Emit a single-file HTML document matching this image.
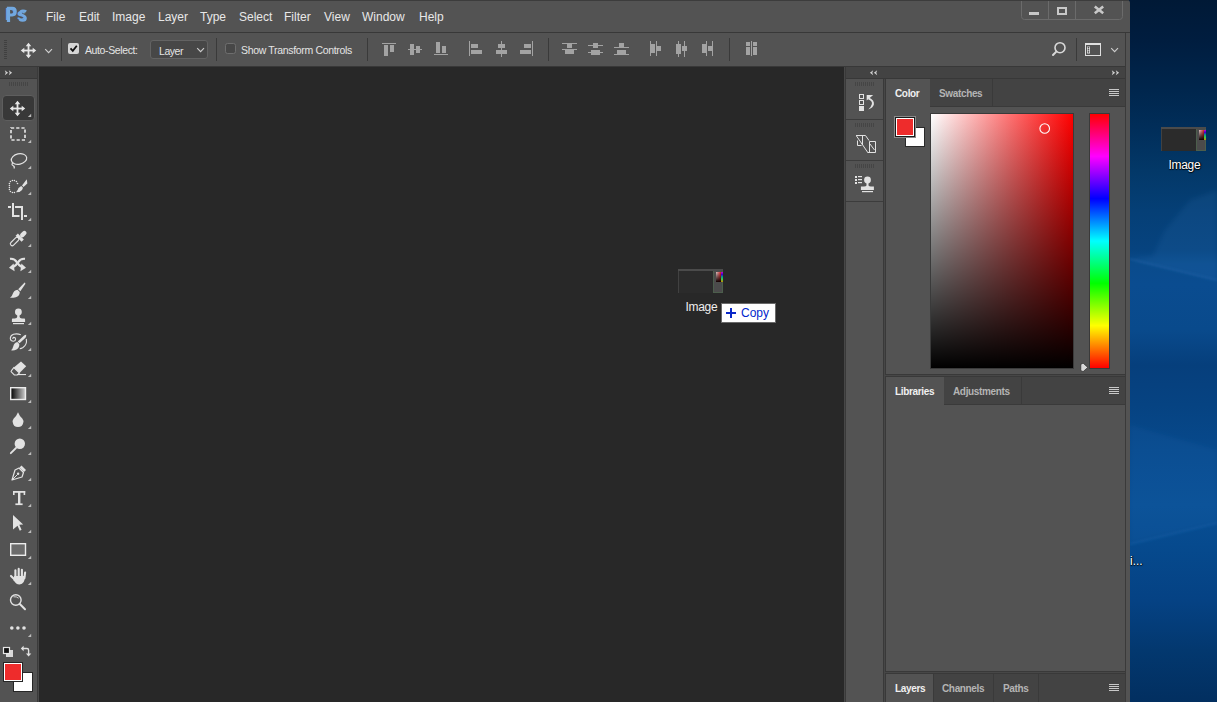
<!DOCTYPE html>
<html><head><meta charset="utf-8">
<style>
*{margin:0;padding:0;box-sizing:border-box}
html,body{width:1217px;height:702px;overflow:hidden}
body{position:relative;font-family:"Liberation Sans",sans-serif;
background:linear-gradient(180deg,#001936 0px,#001d3f 40px,#00264d 90px,#012e5a 130px,#033868 170px,#053f76 210px,#06437f 250px,#0a4b8c 264px,#0a4c90 285px,#094a8c 330px,#063f7c 365px,#064382 405px,#07498c 450px,#084e94 505px,#064a8e 545px,#054284 600px,#03386f 650px,#022f60 702px);}
.a{position:absolute}
.t{position:absolute;white-space:nowrap;line-height:1}
#win{position:absolute;left:0;top:0;width:1130px;height:702px;background:#535353;border-top-right-radius:3px;overflow:hidden}
.menu{font-size:12px;color:#e8e8e8;top:11px}
.opt{font-size:10.5px;color:#e4e4e4;letter-spacing:-0.38px}
.tab{font-size:10px;font-weight:bold;letter-spacing:-0.35px;color:#f0f0f0;margin-top:1px}
.tab.in{color:#b4b4b4}
</style></head><body>
<div id="win">
  <!-- top border -->
  <div class="a" style="left:0;top:0;width:1130px;height:1px;background:#3c3c3c"></div>
  <!-- menubar line -->
  <div class="a" style="left:0;top:32px;width:1130px;height:1px;background:#383838"></div>
  <!-- options bar bottom line -->
  <div class="a" style="left:0;top:66px;width:1130px;height:1px;background:#383838"></div>
  <!-- left toolbar header -->
  <div class="a" style="left:0;top:67px;width:37px;height:11px;background:#434343"></div>
  <div class="a" style="left:0;top:78px;width:37px;height:1px;background:#383838"></div>
  <div class="a" style="left:37px;top:67px;width:2px;height:635px;background:#484848"></div>
  <div class="a" style="left:37px;top:67px;width:1px;height:635px;background:#3a3a3a"></div>
  <!-- canvas -->
  <div class="a" style="left:39px;top:67px;width:805px;height:635px;background:#282828"></div>
  <!-- dock strips -->
  <div class="a" style="left:844px;top:67px;width:2px;height:635px;background:#474747;border-right:1px solid #393939"></div>
  <div class="a" style="left:846px;top:67px;width:279px;height:11px;background:#434343"></div>
  <div class="a" style="left:846px;top:78px;width:279px;height:1px;background:#383838"></div>
  <div class="a" style="left:883px;top:79px;width:3px;height:623px;background:#474747;border-left:1px solid #393939;border-right:1px solid #393939"></div>
  <div class="a" style="left:1125px;top:33px;width:1px;height:669px;background:#3a3a3a"></div>
  <div class="a" style="left:1126px;top:33px;width:4px;height:669px;background:#535353"></div>
  <!-- dock button separators -->
  <div class="a" style="left:846px;top:119px;width:37px;height:1px;background:#3c3c3c"></div>
  <div class="a" style="left:846px;top:160px;width:37px;height:1px;background:#3c3c3c"></div>
  <div class="a" style="left:846px;top:201px;width:37px;height:1px;background:#3c3c3c"></div>

  <!-- Color panel tabs bar -->
  <div class="a" style="left:886px;top:79px;width:239px;height:28px;background:#434343"></div>
  <div class="a" style="left:886px;top:79px;width:44px;height:28px;background:#535353"></div>
  <div class="a" style="left:930px;top:106px;width:195px;height:1px;background:#3a3a3a"></div>
  <div class="a" style="left:992px;top:79px;width:1px;height:27px;background:#3a3a3a"></div>
  <!-- color panel bottom -->
  <div class="a" style="left:885px;top:374px;width:240px;height:3px;background:#474747;border-top:1px solid #393939;border-bottom:1px solid #393939"></div>
  <!-- Libraries tabs -->
  <div class="a" style="left:886px;top:377px;width:239px;height:27px;background:#434343"></div>
  <div class="a" style="left:886px;top:377px;width:58px;height:28px;background:#535353"></div>
  <div class="a" style="left:944px;top:404px;width:181px;height:1px;background:#3a3a3a"></div>
  <div class="a" style="left:1021px;top:377px;width:1px;height:27px;background:#3a3a3a"></div>
  <!-- libraries bottom -->
  <div class="a" style="left:885px;top:671px;width:240px;height:3px;background:#474747;border-top:1px solid #393939;border-bottom:1px solid #393939"></div>
  <!-- Layers tabs -->
  <div class="a" style="left:886px;top:674px;width:239px;height:28px;background:#434343"></div>
  <div class="a" style="left:886px;top:674px;width:47px;height:28px;background:#535353"></div>
  <div class="a" style="left:933px;top:674px;width:1px;height:28px;background:#3a3a3a"></div>
  <div class="a" style="left:993px;top:674px;width:1px;height:28px;background:#3a3a3a"></div>
  <div class="a" style="left:1038px;top:674px;width:1px;height:28px;background:#3a3a3a"></div>

  <!-- text -->
  <div class="t" style="left:5px;top:6px;font-size:17px;font-weight:bold;color:#6ea6de;letter-spacing:0.5px">Ps</div>
  <div class="t menu" style="left:46px">File</div>
  <div class="t menu" style="left:79px">Edit</div>
  <div class="t menu" style="left:112px">Image</div>
  <div class="t menu" style="left:158px">Layer</div>
  <div class="t menu" style="left:200px">Type</div>
  <div class="t menu" style="left:239px">Select</div>
  <div class="t menu" style="left:284px">Filter</div>
  <div class="t menu" style="left:324px">View</div>
  <div class="t menu" style="left:362px">Window</div>
  <div class="t menu" style="left:419px">Help</div>

  <div class="t opt" style="left:85px;top:45px">Auto-Select:</div>
  <div class="a" style="left:150px;top:40px;width:58px;height:19px;background:#474747;border:1px solid #636363;border-radius:3px"></div>
  <div class="t opt" style="left:159px;top:45.5px;letter-spacing:-0.45px">Layer</div>
  <div class="t opt" style="left:241px;top:45px;letter-spacing:-0.33px">Show Transform Controls</div>

  <div class="t tab" style="left:895px;top:88px">Color</div>
  <div class="t tab in" style="left:939px;top:88px">Swatches</div>
  <div class="t tab" style="left:895px;top:386px">Libraries</div>
  <div class="t tab in" style="left:953px;top:386px">Adjustments</div>
  <div class="t tab" style="left:895px;top:683px">Layers</div>
  <div class="t tab in" style="left:942px;top:683px">Channels</div>
  <div class="t tab in" style="left:1003px;top:683px">Paths</div>

  <!-- color field -->
  <div class="a" style="left:930px;top:113px;width:144px;height:256px;background:#3a3a3a"></div>
  <div class="a" style="left:931px;top:114px;width:142px;height:254px;background:linear-gradient(0deg,#000 0%,rgba(0,0,0,0) 100%),linear-gradient(90deg,#fff 0%,#f00 100%)"></div>
  <div class="a" style="left:1089px;top:113px;width:21px;height:256px;background:#3a3a3a"></div>
  <div class="a" style="left:1090px;top:114px;width:19px;height:254px;background:linear-gradient(180deg,#f00 0%,#f0f 16.67%,#00f 33.33%,#0ff 50%,#0f0 66.67%,#ff0 83.33%,#f00 100%)"></div>

  <!-- ghost -->
  <div class="a" style="left:678px;top:269px;width:45px;height:24px;background:#2b2b2b"></div>
  <div class="a" style="left:678px;top:269px;width:45px;height:2px;background:#4b4b4b"></div>
  <div class="a" style="left:678px;top:271px;width:1px;height:22px;background:#414141"></div>
  <div class="a" style="left:713px;top:271px;width:10px;height:22px;background:#4b4b4b;border:1px solid #4c5e4c;border-top:none"></div>
  <div class="a" style="left:716px;top:272px;width:5px;height:10px;background:linear-gradient(0deg,#100 0%,rgba(0,0,0,0) 100%),linear-gradient(90deg,#d8c8c8,#d42020)"></div>
  <div class="a" style="left:721px;top:272px;width:2px;height:10px;background:linear-gradient(180deg,#c0c,#40c,#0a8,#4c4,#c80)"></div>
  <div class="t" style="left:685.5px;top:301px;font-size:12px;color:#eee;letter-spacing:-0.3px">Image</div>
  <div class="a" style="left:721px;top:303px;width:55px;height:20px;background:#fff;border:1px solid #6a6a6a"></div>
  <div class="t" style="left:741px;top:307px;font-size:12px;color:#0026cc">Copy</div>
  <div class="a" style="left:726px;top:312px;width:10px;height:2px;background:#0a28c8"></div>
  <div class="a" style="left:730px;top:308px;width:2px;height:10px;background:#0a28c8"></div>

</div>

<!--SVGSTART--><svg class="a" style="left:0;top:0" width="1217" height="702" viewBox="0 0 1217 702">
<defs>
  <g id="move4">
    <rect x="-0.9" y="-6" width="1.8" height="12"/>
    <rect x="-6" y="-0.9" width="12" height="1.8"/>
    <path d="M0,-7.7 L2.8,-4.2 L-2.8,-4.2Z M0,7.7 L2.8,4.2 L-2.8,4.2Z M-7.7,0 L-4.2,2.8 L-4.2,-2.8Z M7.7,0 L4.2,2.8 L4.2,-2.8Z"/>
  </g>
  <path id="tri" d="M31.2,113.8 L31.2,117.1 L27.9,117.1Z"/>
  <g id="grip10">
    <rect x="0" y="0" width="1" height="4"/><rect x="2" y="0" width="1" height="4"/><rect x="4" y="0" width="1" height="4"/><rect x="6" y="0" width="1" height="4"/><rect x="8" y="0" width="1" height="4"/>
    <rect x="10" y="0" width="1" height="4"/><rect x="12" y="0" width="1" height="4"/><rect x="14" y="0" width="1" height="4"/><rect x="16" y="0" width="1" height="4"/><rect x="18" y="0" width="1" height="4"/>
  </g>
  <g id="ham"><rect x="0" y="0" width="10" height="1"/><rect x="0" y="2" width="10" height="1"/><rect x="0" y="4" width="10" height="1"/><rect x="0" y="6" width="10" height="1"/></g>
  <path id="dbl" d="M0,0 L3.3,2.5 L0,5 L0.9,2.5Z M4,0 L7.3,2.5 L4,5 L4.9,2.5Z"/>
</defs>

<!-- ===== Ps logo ===== -->
<path d="M6.85,6.7 H12.3 Q16.8,6.7 16.8,11.6 Q16.8,16.5 12.3,16.5 H10.1 V22.1 H6.85Z M10.1,9.6 V13.6 H12.2 Q13.7,13.6 13.7,11.6 Q13.7,9.6 12.2,9.6Z" fill="#72a8e0" fill-rule="evenodd"/>
<path d="M26.2,11.6 Q24.8,10.6 23,10.6 Q20.5,10.6 20.5,12.7 Q20.5,14.3 23,15.3 Q25.6,16.3 25.6,18.2 Q25.6,20.6 22.7,20.6 Q20.9,20.6 19.4,19.6" fill="none" stroke="#72a8e0" stroke-width="2.4"/>

<!-- ===== window controls ===== -->
<path d="M1021.5,1 V16.5 Q1021.5,19.5 1024.5,19.5 H1119.5 Q1122.5,19.5 1122.5,16.5 V1" fill="none" stroke="#6b6b6b" stroke-width="1"/>
<rect x="1048" y="1" width="1" height="18" fill="#6b6b6b"/>
<rect x="1075" y="1" width="1" height="18" fill="#6b6b6b"/>
<rect x="1029" y="12" width="10" height="3" fill="#c8c8c8"/>
<rect x="1058" y="8" width="8" height="6" fill="none" stroke="#c8c8c8" stroke-width="2"/>
<path d="M1094.8,6.6 L1103.2,13.2 M1103.2,6.6 L1094.8,13.2" stroke="#c8c8c8" stroke-width="2.6"/>

<!-- ===== options bar ===== -->
<g fill="#404040">
  <rect x="4" y="40" width="3" height="1"/><rect x="4" y="42" width="3" height="1"/><rect x="4" y="44" width="3" height="1"/><rect x="4" y="46" width="3" height="1"/><rect x="4" y="48" width="3" height="1"/>
  <rect x="4" y="50" width="3" height="1"/><rect x="4" y="52" width="3" height="1"/><rect x="4" y="54" width="3" height="1"/><rect x="4" y="56" width="3" height="1"/><rect x="4" y="58" width="3" height="1"/>
</g>
<g fill="#e6e6e6" transform="translate(28.5,50.5)"><use href="#move4"/></g>
<path d="M45.2,49.2 L48.6,52.6 L52,49.2" fill="none" stroke="#d0d0d0" stroke-width="1.15"/>
<g fill="#3a3a3a">
  <rect x="61" y="38" width="1" height="23"/>
  <rect x="216" y="38" width="1" height="23"/>
  <rect x="367" y="38" width="1" height="23"/>
  <rect x="548" y="38" width="1" height="23"/>
  <rect x="729" y="38" width="1" height="23"/>
  <rect x="1076" y="38" width="1" height="23"/>
</g>
<!-- checkbox checked -->
<rect x="68" y="43" width="11" height="11" rx="2" fill="#d6d6d6"/>
<path d="M70.5,48.3 L72.8,50.8 L76.8,45.8" fill="none" stroke="#111" stroke-width="1.8"/>
<!-- dropdown chevron -->
<path d="M197.2,48.2 L200.6,51.6 L204,48.2" fill="none" stroke="#cccccc" stroke-width="1.15"/>
<!-- checkbox unchecked -->
<rect x="225.5" y="43.5" width="10" height="10" rx="2" fill="#474747" stroke="#6e6e6e" stroke-width="1"/>

<!-- align icons -->
<g fill="#a3a3a3">
  <!-- align top -->
  <rect x="382" y="43" width="14" height="1"/><rect x="384" y="45" width="4" height="11"/><rect x="390" y="45" width="4" height="7"/>
  <!-- align vcenter -->
  <rect x="408" y="49" width="14" height="1"/><rect x="410" y="44" width="4" height="11"/><rect x="416" y="46" width="4" height="7"/>
  <!-- align bottom -->
  <rect x="434" y="54" width="14" height="1"/><rect x="436" y="42" width="4" height="11"/><rect x="442" y="46" width="4" height="7"/>
  <!-- align left -->
  <rect x="469" y="41" width="1" height="15"/><rect x="471" y="44" width="7" height="4"/><rect x="471" y="50" width="11" height="4"/>
  <!-- align hcenter -->
  <rect x="501" y="41" width="1" height="16"/><rect x="498" y="44" width="7" height="4"/><rect x="496" y="50" width="11" height="4"/>
  <!-- align right -->
  <rect x="532" y="41" width="1" height="15"/><rect x="524" y="44" width="7" height="4"/><rect x="520" y="50" width="11" height="4"/>
  <!-- distribute top -->
  <rect x="562" y="43" width="15" height="1"/><rect x="567" y="44" width="5" height="4"/><rect x="562" y="49" width="15" height="1"/><rect x="565" y="50" width="9" height="4"/>
  <!-- distribute vcenter -->
  <rect x="588" y="45" width="15" height="1"/><rect x="593" y="43" width="5" height="5"/><rect x="588" y="52" width="15" height="1"/><rect x="591" y="50" width="9" height="5"/>
  <!-- distribute bottom -->
  <rect x="619" y="43" width="5" height="4"/><rect x="614" y="47" width="15" height="1"/><rect x="617" y="50" width="9" height="4"/><rect x="614" y="54" width="15" height="1"/>
  <!-- distribute left -->
  <rect x="650" y="41" width="1" height="15"/><rect x="651" y="44" width="4" height="9"/><rect x="656" y="41" width="1" height="15"/><rect x="657" y="46" width="4" height="5"/>
  <!-- distribute hcenter -->
  <rect x="678" y="41" width="1" height="16"/><rect x="676" y="44" width="5" height="10"/><rect x="684" y="41" width="1" height="16"/><rect x="682" y="46" width="5" height="5"/>
  <!-- distribute right -->
  <rect x="702" y="44" width="4" height="9"/><rect x="706" y="41" width="1" height="15"/><rect x="708" y="46" width="4" height="5"/><rect x="712" y="41" width="1" height="15"/>
  <!-- auto align -->
  <rect x="746" y="42" width="4" height="4"/><rect x="746" y="47" width="4" height="8"/><rect x="751" y="41" width="1" height="15"/><rect x="753" y="42" width="4" height="4"/><rect x="753" y="47" width="4" height="8"/>
</g>

<!-- search -->
<circle cx="1060" cy="47.7" r="5" fill="none" stroke="#d8d8d8" stroke-width="1.6"/>
<path d="M1056.3,51.6 L1053,55" stroke="#d8d8d8" stroke-width="2" stroke-linecap="round"/>
<!-- workspace -->
<rect x="1085.5" y="43.5" width="15" height="12" fill="none" stroke="#e0e0e0" stroke-width="1"/>
<rect x="1085" y="43" width="16" height="2" fill="#e0e0e0"/>
<rect x="1087" y="46.5" width="3" height="7" fill="#e0e0e0"/>
<circle cx="1088.5" cy="47.6" r="0.85" fill="#535353"/><circle cx="1088.5" cy="49.7" r="0.85" fill="#535353"/><circle cx="1088.5" cy="51.8" r="0.85" fill="#535353"/>
<path d="M1111.2,48.2 L1114.6,51.6 L1118,48.2" fill="none" stroke="#cccccc" stroke-width="1.15"/>

<!-- ===== header arrows ===== -->
<g fill="#d0d0d0">
  <use href="#dbl" transform="translate(4.8,70.2)"/>
  <use href="#dbl" transform="translate(1111.8,70.2)"/>
  <use href="#dbl" transform="translate(877.2,70.2) scale(-1,1)"/>
</g>

<!-- grips -->
<g fill="#454545">
  <use href="#grip10" transform="translate(9,82)"/>
  <use href="#grip10" transform="translate(855,82)"/>
  <use href="#grip10" transform="translate(855,123)"/>
  <use href="#grip10" transform="translate(855,164)"/>
</g>

<!-- hamburgers -->
<g fill="#c8c8c8">
  <use href="#ham" transform="translate(1109,89)"/>
  <use href="#ham" transform="translate(1109,387)"/>
  <use href="#ham" transform="translate(1109,684)"/>
</g>

<!-- ===== left toolbar ===== -->
<rect x="2.5" y="95.5" width="32" height="25" rx="3.5" fill="#383838" stroke="#5e5e5e" stroke-width="1"/>
<g fill="#e6e6e6" transform="translate(17.5,108.5)"><use href="#move4"/></g>
<g fill="#bdbdbd">
  <use href="#tri"/>
  <use href="#tri" transform="translate(0,26)"/>
  <use href="#tri" transform="translate(0,52)"/>
  <use href="#tri" transform="translate(0,78)"/>
  <use href="#tri" transform="translate(0,104)"/>
  <use href="#tri" transform="translate(0,130)"/>
  <use href="#tri" transform="translate(0,156)"/>
  <use href="#tri" transform="translate(0,182)"/>
  <use href="#tri" transform="translate(0,208)"/>
  <use href="#tri" transform="translate(0,234)"/>
  <use href="#tri" transform="translate(0,260)"/>
  <use href="#tri" transform="translate(0,286)"/>
  <use href="#tri" transform="translate(0,312)"/>
  <use href="#tri" transform="translate(0,338)"/>
  <use href="#tri" transform="translate(0,364)"/>
  <use href="#tri" transform="translate(0,390)"/>
  <use href="#tri" transform="translate(0,416)"/>
  <use href="#tri" transform="translate(0,442)"/>
  <use href="#tri" transform="translate(0,468)"/>
  <use href="#tri" transform="translate(0,520)"/>
</g>
<g fill="none" stroke="#e2e2e2">
  <!-- marquee -->
  <rect x="11" y="128" width="14" height="12" stroke-width="1.7" stroke-dasharray="3.2,2"/>
  <!-- lasso -->
  <ellipse cx="19" cy="159" rx="7.8" ry="5.2" stroke-width="1.2" transform="rotate(-12 19 159)"/>
  <path d="M13,163 q-2,1 0,2.5 q2,1 1,3" stroke-width="1.2"/>
</g>
<!-- quick selection -->
<g fill="#e2e2e2">
  <circle cx="12.4" cy="180.5" r="0.8"/><circle cx="14.4" cy="180.5" r="0.8"/><circle cx="10.4" cy="181.5" r="0.8"/><circle cx="16.4" cy="181.5" r="0.8"/><circle cx="17.5" cy="183.5" r="0.8"/>
  <circle cx="9.4" cy="183.5" r="0.8"/><circle cx="9.4" cy="185.5" r="0.8"/><circle cx="9.4" cy="187.5" r="0.8"/><circle cx="9.4" cy="189.5" r="0.8"/><circle cx="10.4" cy="191.5" r="0.8"/><circle cx="12.4" cy="192.5" r="0.8"/><circle cx="14.4" cy="192.5" r="0.8"/>
  <path d="M26.8,179.3 L27.3,183.5 L23.5,187 L22,185.5Z"/>
  <path d="M21.2,186 L23,187.8 Q22.5,191 19.5,192 L16,192.2 Q18,190 18.5,188Z"/>
</g>
<!-- crop -->
<g fill="#e2e2e2">
  <rect x="12" y="203" width="2" height="14"/><rect x="12" y="215" width="7.5" height="2"/>
  <rect x="8" y="206" width="3" height="2"/><rect x="15" y="206" width="8" height="2"/>
  <rect x="21" y="206" width="2" height="14"/><rect x="24" y="215" width="3" height="2"/>
</g>
<!-- eyedropper -->
<g>
  <rect x="9.4" y="239.6" width="10.4" height="3.8" rx="1.9" fill="none" stroke="#e2e2e2" stroke-width="1.1" transform="rotate(-45 14.6 241.5)"/>
  <rect x="18.1" y="233.4" width="3.2" height="8.4" fill="#e2e2e2" transform="rotate(-45 19.7 237.6)"/>
  <rect x="19.6" y="231.9" width="7.4" height="4.4" rx="2.2" fill="#e2e2e2" transform="rotate(-45 23.3 234.1)"/>
</g>
<!-- content-aware move -->
<g fill="none" stroke="#e2e2e2" stroke-width="2.2">
  <path d="M10,258.8 Q14.5,258.3 17,262.3 Q19.3,265.8 21.8,267"/>
  <path d="M25,258.8 Q20.5,258.3 18,262.3 Q15.7,265.8 13.2,267"/>
</g>
<g fill="#e2e2e2">
  <path d="M9,267.8 L13.6,263.6 L14.6,271.2Z"/>
  <path d="M26,267.8 L21.4,263.6 L20.4,271.2Z"/>
</g>
<!-- brush -->
<g fill="#e2e2e2">
  <path d="M24.6,282.6 Q25.6,282.8 25.3,284 L20.3,291.3 L18.2,289.3Z"/>
  <path d="M17.5,289.7 L19.8,292 Q19.6,296.2 15.8,297.3 Q13,298 10,297.8 Q12.2,296.3 12.9,293.6 Q13.8,290.3 17.5,289.7Z"/>
</g>
<!-- stamp -->
<g fill="#e2e2e2">
  <circle cx="18.4" cy="312" r="3.4"/>
  <path d="M17.2,314.5 H19.6 V317 Q19.8,318.2 22,318.4 H24.3 Q25.1,318.6 25.1,319.4 V321.9 H11.9 V319.4 Q11.9,318.6 12.7,318.4 H14.8 Q17,318.2 17.2,317Z"/>
  <rect x="13" y="323" width="11" height="1.2"/>
</g>
<!-- history brush -->
<g fill="none" stroke="#e2e2e2" stroke-width="1.1">
  <path d="M20.8,334.7 Q17,333.3 13.5,334.3 Q10.3,335.5 10.3,338.5 Q10.6,341.3 13.5,341.3 Q15.6,341 15.6,339 Q15.4,337.3 13.8,337.4 Q12.6,337.6 12.9,339"/>
  <path d="M26.3,338.8 Q27.3,344.5 23,347.5 Q21,348.7 19.8,348.6"/>
</g>
<g fill="#e2e2e2">
  <path d="M26.2,334.8 Q26.4,336.5 25.5,337.8 L19.5,343.2 L17.7,341.6 L23.8,335.8 Q25,334.8 26.2,334.8Z"/>
  <path d="M17.4,342 L19.3,343.9 Q19.6,347.5 16.5,349.5 Q13.8,350.8 11,350.3 Q12.8,348.8 13.3,346.3 Q14,342.8 17.4,342Z"/>
</g>
<!-- eraser -->
<g>
  <path d="M21,361.5 L26.2,366.2 L19.5,373 L13.8,367.6Z" fill="#e2e2e2"/>
  <path d="M13.8,367.6 L19.5,373 L17.2,375 L14.3,375 L11.3,372 Q10.8,371.4 11.3,370.8Z" fill="none" stroke="#e2e2e2" stroke-width="1.1"/>
  <rect x="17" y="374" width="9" height="1.1" fill="#e2e2e2"/>
</g>
<!-- gradient -->
<defs><linearGradient id="gr" x1="0" x2="1"><stop offset="0" stop-color="#000"/><stop offset="1" stop-color="#cfcfcf"/></linearGradient></defs>
<rect x="10.7" y="387.7" width="14.8" height="11.8" fill="url(#gr)" stroke="#ececec" stroke-width="1.4"/>
<!-- blur -->
<path d="M18,412.2 Q19.5,416 22.3,418.5 Q23.8,420.5 23.3,422.5 Q22.5,427 18,427 Q13.5,427 12.8,422.5 Q12.3,420.5 13.7,418.5 Q16.5,416 18,412.2Z" fill="#e2e2e2"/>
<!-- dodge -->
<circle cx="19.8" cy="443.8" r="5.2" fill="#e2e2e2"/>
<path d="M16,448 L10.8,453.2" stroke="#e2e2e2" stroke-width="1.8" stroke-linecap="round"/>
<!-- pen -->
<g>
  <path d="M21.5,465.5 L26,470 L24,472 L19.5,467.5Z" fill="#e2e2e2"/>
  <path d="M19,468 L23.5,472.5 L22,477 L12,480 L15,470Z" fill="none" stroke="#e2e2e2" stroke-width="1.2" stroke-linejoin="round"/>
  <path d="M12.5,479.5 L17.5,474.5" stroke="#e2e2e2" stroke-width="1"/>
  <circle cx="18.1" cy="473.7" r="1.2" fill="#e2e2e2"/>
</g>
<!-- type -->
<g fill="#e2e2e2">
  <rect x="13" y="491" width="12.2" height="1.8"/><rect x="13" y="491" width="1.6" height="4"/><rect x="23.6" y="491" width="1.6" height="4"/>
  <rect x="18" y="491" width="2.4" height="13.5"/><rect x="15.4" y="503.4" width="7.2" height="1.7"/>
</g>
<!-- path selection -->
<path d="M13,515 L23.2,524.6 L19.3,524.8 L21.6,529.8 L19.8,530.8 L17.5,525.8 L13,529.6Z" fill="#e2e2e2"/>
<!-- rectangle -->
<rect x="10.7" y="543.7" width="14.8" height="11.6" fill="#6b6b6b" stroke="#ececec" stroke-width="1.4"/>
<!-- hand -->
<g stroke="#e2e2e2" stroke-width="2.1" stroke-linecap="round" fill="none">
  <path d="M15.4,570.4 V577"/><path d="M18.7,568.9 V577"/><path d="M21.9,569.8 V577"/><path d="M25.1,572.6 L24.4,578"/><path d="M11,575.9 L14.6,579.4"/>
</g>
<path d="M14.2,576 H25.2 Q25,583.6 19.6,584.5 Q16,584.6 13.6,580.3Z" fill="#e2e2e2"/>
<!-- zoom -->
<circle cx="15.8" cy="600" r="5.3" fill="none" stroke="#e2e2e2" stroke-width="1.4"/>
<path d="M13.5,596.8 Q16.5,596.3 18.6,598.2" fill="none" stroke="#e2e2e2" stroke-width="0.9"/>
<path d="M19.8,604 L25,609.2" stroke="#e2e2e2" stroke-width="2" stroke-linecap="round"/>
<!-- dots -->
<g fill="#e2e2e2"><circle cx="11.8" cy="628" r="1.8"/><circle cx="17.9" cy="628" r="1.8"/><circle cx="24" cy="628" r="1.8"/></g>
<!-- default colors -->
<rect x="6.5" y="650.5" width="6" height="6" fill="#d8d8d8" stroke="#d8d8d8" stroke-width="1"/>
<rect x="3.5" y="647.5" width="6" height="6" fill="#111" stroke="#e6e6e6" stroke-width="1.2"/>
<!-- swap -->
<path d="M22.5,648.5 H27 Q28.6,648.5 28.6,650.2 V654.5" fill="none" stroke="#e2e2e2" stroke-width="1.4"/>
<g fill="#e2e2e2">
  <path d="M20.8,648.5 L23.6,645.8 L23.6,651.2Z"/>
  <path d="M28.6,656.5 L25.9,653.5 L31.3,653.5Z"/>
</g>
<!-- toolbar swatches -->
<rect x="13.5" y="672.5" width="19" height="19" fill="#fff" stroke="#262626" stroke-width="1"/>
<rect x="3.5" y="662.5" width="19" height="19" fill="none" stroke="#262626" stroke-width="1"/>
<rect x="4.5" y="663.5" width="17" height="17" fill="#ee2c2c" stroke="#fff" stroke-width="1"/>
<!-- ===== dock icons ===== -->
<!-- history -->
<g>
  <rect x="859.5" y="94.5" width="4" height="4" fill="none" stroke="#e2e2e2" stroke-width="1"/>
  <rect x="859.5" y="100.5" width="4" height="4" fill="none" stroke="#e2e2e2" stroke-width="1"/>
  <rect x="859" y="106" width="5" height="5" fill="#e2e2e2"/>
  <path d="M866.7,95 H873.2 L866.7,100.4Z" fill="#e2e2e2"/><path d="M869,97.4 Q874.6,100 873.9,104.5 Q873,108 868.3,109.4 Q871.4,106.6 871.9,104.1 Q872.4,100.8 868.3,99.6Z" fill="#e2e2e2"/>
</g>
<!-- properties/ transform -->
<g fill="none" stroke="#e2e2e2" stroke-width="1">
  <path d="M856,135.5 H865.5 L869,140.5"/>
  <path d="M856.5,136 L867.8,152.5"/>
  <path d="M857.5,140.5 V145.5 H861.5"/>
  <path d="M862.5,136 V145"/>
  <path d="M869.5,141.5 H875.5 V152.5 H867.5"/>
  <path d="M869.5,141.5 V152"/>
  <path d="M870,144 L874.5,150"/>
</g>
<!-- actions/ stamp list -->
<g fill="#e2e2e2">
  <rect x="855" y="176" width="2" height="2"/><rect x="858" y="176" width="4" height="1.2"/>
  <rect x="855" y="179" width="2" height="2"/><rect x="858" y="179" width="4" height="1.2"/>
  <rect x="855" y="182" width="2" height="2"/><rect x="858" y="182" width="4" height="1.2"/>
  <circle cx="867.5" cy="180" r="3.4"/>
  <path d="M866.5,182.5 H868.5 V185.5 Q869,186.3 871,186.6 H873.9 V190 H860.9 V186.6 H864 Q866,186.3 866.5,185.5Z"/>
  <rect x="862" y="191" width="11" height="1.2"/>
</g>

<!-- ===== color panel ===== -->
<rect x="905.5" y="127.5" width="19" height="19" fill="#fff" stroke="#2a2a2a" stroke-width="1"/>
<rect x="894.5" y="116.5" width="21" height="21" fill="none" stroke="#8a8a8a" stroke-width="1"/>
<rect x="895.5" y="117.5" width="19" height="19" fill="none" stroke="#1c1c1c" stroke-width="1"/>
<rect x="896.5" y="118.5" width="17" height="17" fill="#ee2c2c" stroke="#fff" stroke-width="1"/>
<circle cx="1044.7" cy="128.5" r="4.8" fill="none" stroke="#fff" stroke-width="1.1"/>
<path d="M1080.8,365 Q1080.8,363.5 1082.3,363.5 L1083.5,363.5 L1087.8,367.4 L1083.5,371.3 L1082.3,371.3 Q1080.8,371.3 1080.8,369.8Z" fill="#dadada" stroke="#2a2a2a" stroke-width="0.7"/>
</svg>
<!--SVGEND-->
<!-- desktop -->
<svg class="a" style="left:1130px;top:0" width="87" height="702" viewBox="1130 0 87 702">
  <defs><filter id="bl" x="-20%" y="-20%" width="140%" height="140%"><feGaussianBlur stdDeviation="2.5"/></filter><filter id="bl1"><feGaussianBlur stdDeviation="0.8"/></filter></defs>
  <g filter="url(#bl)">
  <polygon points="1190,200 1217,190 1217,280 1130,259 1153,256 1165,230" fill="rgba(90,160,240,0.08)"/>
  <polygon points="1130,425 1217,450 1217,523 1130,544" fill="rgba(90,160,240,0.06)"/>
  </g>
  <g filter="url(#bl1)">
  <line x1="1130" y1="259" x2="1217" y2="280" stroke="rgba(120,180,255,0.10)" stroke-width="2"/>
  <line x1="1130" y1="544" x2="1217" y2="523" stroke="rgba(120,180,255,0.08)" stroke-width="2"/>
  </g>
</svg>

  <div class="a" style="left:1161px;top:127px;width:45px;height:24px;background:#2b2b2b"></div>
  <div class="a" style="left:1161px;top:127px;width:45px;height:2px;background:#4b4b4b"></div>
  <div class="a" style="left:1161px;top:129px;width:1px;height:22px;background:#414141"></div>
  <div class="a" style="left:1196px;top:129px;width:10px;height:22px;background:#4b4b4b;border:1px solid #4c5e4c;border-top:none"></div>
  <div class="a" style="left:1199px;top:130px;width:5px;height:10px;background:linear-gradient(0deg,#100 0%,rgba(0,0,0,0) 100%),linear-gradient(90deg,#d8c8c8,#d42020)"></div>
  <div class="a" style="left:1204px;top:130px;width:2px;height:10px;background:linear-gradient(180deg,#c0c,#40c,#0a8,#4c4,#c80)"></div>
<div class="t" style="left:1168.5px;top:159px;font-size:12px;color:#fff;letter-spacing:-0.3px;text-shadow:0 1px 1px #000,1px 0 1px #000">Image</div>
<div class="t" style="left:1130px;top:555px;font-size:12px;color:#fff;text-shadow:0 1px 1px #000,1px 0 1px #000">i...</div>

</body></html>
